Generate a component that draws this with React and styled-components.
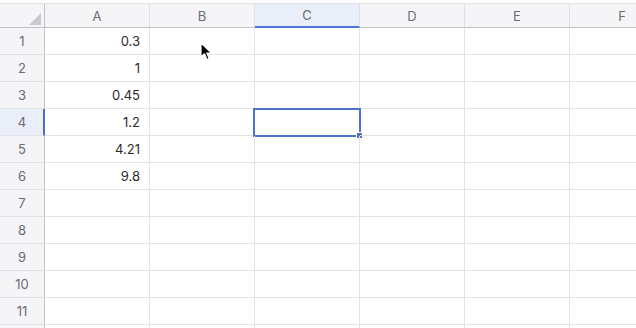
import React from "react";
import styled, { createGlobalStyle } from "styled-components";

const GlobalStyle = createGlobalStyle`
  html, body {
    margin: 0;
    background: #fff;
    font-family: Inter, "Noto Sans", sans-serif;
  }
`;

const columns = ["A", "B", "C", "D", "E", "F"];
const values = { 1: "0.3", 2: "1", 3: "0.45", 4: "1.2", 5: "4.21", 6: "9.8" };
const rows = [1, 2, 3, 4, 5, 6, 7, 8, 9, 10, 11, null];
const activeCol = "C";
const activeRow = 4;

const Page = styled.div`
  position: relative;
  width: 636px;
  height: 328px;
  overflow: hidden;
  padding-top: 3px;
  box-sizing: border-box;
`;

const Grid = styled.div`
  display: grid;
  grid-template-columns: 45px repeat(6, 105px);
  grid-auto-rows: 27px;
  grid-template-rows: 24px;
  border-top: 1px solid #e3e3e6;
`;

const Corner = styled.div`
  position: relative;
  background: #f5f5f7;
  border-right: 1px solid #c2c2c6;
  border-bottom: 1px solid #c2c2c6;
`;

const Triangle = styled.div`
  position: absolute;
  right: 3px;
  bottom: 2px;
  width: 0;
  height: 0;
  border-left: 12px solid transparent;
  border-bottom: 12px solid #c9c9cd;
`;

const ColHeader = styled.div`
  display: flex;
  align-items: center;
  justify-content: center;
  font-size: 13px;
  color: #6b6b70;
  background: ${({ $active }) => ($active ? "#e9eef9" : "#f5f5f7")};
  border-right: 1px solid #e1e1e4;
  border-bottom: ${({ $active }) =>
    $active ? "2px solid #4a74d8" : "1px solid #c2c2c6"};
  box-sizing: border-box;
`;

const RowHeader = styled.div`
  display: flex;
  align-items: center;
  justify-content: center;
  font-size: 13px;
  color: #6b6b70;
  background: ${({ $active }) => ($active ? "#e9eef9" : "#f5f5f7")};
  border-right: ${({ $active }) =>
    $active ? "2px solid #4a6fc9" : "1px solid #c2c2c6"};
  border-bottom: 1px solid #e3e3e6;
  box-sizing: border-box;
  padding-left: ${({ $active }) => ($active ? "1px" : "0")};
`;

const Cell = styled.div`
  position: relative;
  display: flex;
  align-items: center;
  justify-content: flex-end;
  padding-right: 9px;
  font-size: 13px;
  color: #2b2b2e;
  border-right: 1px solid #e3e3e6;
  border-bottom: 1px solid #e3e3e6;
`;

const Selection = styled.div`
  position: absolute;
  top: -1px;
  left: -2px;
  right: -2px;
  bottom: -2px;
  border: 2px solid #4f72c9;
  pointer-events: none;
`;

const Handle = styled.div`
  position: absolute;
  right: -4px;
  bottom: -4px;
  width: 5px;
  height: 5px;
  background: #4f72c9;
  border: 1px solid #fff;
`;

const Pointer = styled.svg`
  position: absolute;
  left: 199px;
  top: 42px;
`;

export default function App() {
  return (
    <Page>
      <GlobalStyle />
      <Grid>
        <Corner>
          <Triangle />
        </Corner>
        {columns.map((c) => (
          <ColHeader key={c} $active={c === activeCol}>
            {c}
          </ColHeader>
        ))}
        {rows.map((r, i) => (
          <React.Fragment key={i}>
            <RowHeader $active={r === activeRow}>{r}</RowHeader>
            {columns.map((c) => (
              <Cell key={c}>
                {c === "A" && r ? values[r] : null}
                {c === activeCol && r === activeRow && (
                  <Selection>
                    <Handle />
                  </Selection>
                )}
              </Cell>
            ))}
          </React.Fragment>
        ))}
      </Grid>
      <Pointer width="14" height="20" viewBox="0 0 14 20">
        <path
          d="M2 1 L2 15 L5.5 11.8 L8 17.5 L10.2 16.5 L7.8 11 L12.5 11 Z"
          fill="#000"
          stroke="#fff"
          strokeWidth="1.2"
          strokeLinejoin="round"
        />
      </Pointer>
    </Page>
  );
}
